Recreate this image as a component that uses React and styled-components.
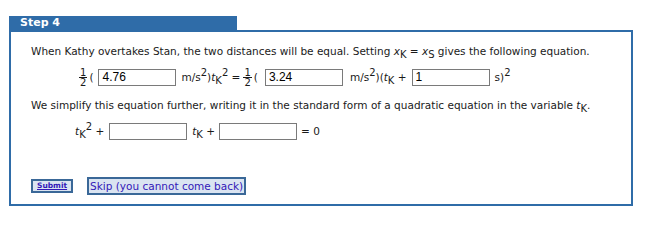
import React from "react";
import styled, { createGlobalStyle } from "styled-components";

const GlobalStyle = createGlobalStyle`
  body {
    margin: 0;
    background: #ffffff;
    font-family: Verdana, "DejaVu Sans", sans-serif;
    font-size: 10.5px;
    color: #1a1a1a;
  }
`;

const Page = styled.div`
  padding: 16px 0 0 9px;
`;

const Panel = styled.div`
  width: 624px;
`;

const Tab = styled.div`
  width: 228px;
  height: 14px;
  padding-left: 11px;
  box-sizing: border-box;
  background: #2f6ca8;
  color: #ffffff;
  font-weight: 700;
  font-size: 11px;
  line-height: 14px;
`;

const Box = styled.div`
  border: 2px solid #2f6ca8;
  padding: 11px 20px 10px 20px;
  height: 176px;
  box-sizing: border-box;
  display: flex;
  flex-direction: column;
`;

const Text = styled.p`
  margin: 0;
  line-height: 16px;
  white-space: nowrap;
`;

const Equation = styled.div`
  display: flex;
  align-items: center;
  gap: 3px;
  height: 20px;
  padding-left: ${(p) => p.$indent}px;
  margin: ${(p) => p.$margin};
  white-space: nowrap;
`;

const Frac = styled.span`
  display: inline-flex;
  flex-direction: column;
  align-items: center;
  font-size: 10px;
  line-height: 9px;
  margin-right: -1px;

  & > span:first-child {
    border-bottom: 1px solid #1a1a1a;
    padding: 0 1px;
  }
`;

const Input = styled.input`
  width: 78px;
  height: 17px;
  box-sizing: border-box;
  border: 1px solid #7a7a7a;
  padding: 0 3px;
  font-family: "Liberation Sans", Arial, sans-serif;
  font-size: 12px;
  color: #000;
  background: #fff;
  margin: 0 ${(p) => p.$gap ?? 2}px;
`;

const Var = styled.i`
  font-style: italic;
`;

const Sub = styled.sub`
  font-size: 10px;
  font-style: normal;
  vertical-align: -3px;
  line-height: 0;
`;

const Sup = styled.sup`
  font-size: 10px;
  vertical-align: 5px;
  line-height: 0;
`;

const Buttons = styled.div`
  margin-top: auto;
  margin-bottom: -1px;
  display: flex;
  align-items: center;
  gap: 14px;
`;

const Button = styled.button`
  font-family: Verdana, "DejaVu Sans", sans-serif;
  background: #dae4f1;
  border: 2px solid #3a6898;
  color: #3318b8;
  padding: ${(p) => (p.$small ? "0 4px" : "0 1px")};
  height: ${(p) => (p.$small ? 14 : 18)}px;
  font-size: ${(p) => (p.$small ? 7.5 : 10.5)}px;
  font-weight: ${(p) => (p.$small ? 700 : 400)};
  text-decoration: ${(p) => (p.$small ? "underline" : "none")};
  line-height: 1;
  cursor: pointer;
`;

const TK = () => (
  <Var>
    t<Sub>K</Sub>
  </Var>
);

const Half = () => (
  <Frac>
    <span>1</span>
    <span>2</span>
  </Frac>
);

export default function App() {
  return (
    <Page>
      <GlobalStyle />
      <Panel>
        <Tab>Step 4</Tab>
        <Box>
          <Text>
            When Kathy overtakes Stan, the two distances will be equal. Setting{" "}
            <Var>
              x<Sub>K</Sub>
            </Var>{" "}
            ={" "}
            <Var>
              x<Sub>S</Sub>
            </Var>{" "}
            gives the following equation.
          </Text>
          <Equation $indent={48} $margin="8px 0 10px">
            <Half />
            <span>(</span>
            <Input defaultValue="4.76" />
            <span>
              m/s<Sup>2</Sup>)<TK />
              <Sup>2</Sup> ={" "}
            </span>
            <Half />
            <span>(</span>
            <Input defaultValue="3.24" $gap={4} />
            <span>
              m/s<Sup>2</Sup>)(<TK /> +
            </span>
            <Input defaultValue="1" />
            <span>
              s)<Sup>2</Sup>
            </span>
          </Equation>
          <Text>
            We simplify this equation further, writing it in the standard form of
            a quadratic equation in the variable <TK />.
          </Text>
          <Equation $indent={44} $margin="8px 0 0">
            <span>
              <TK />
              <Sup>2</Sup> +
            </span>
            <Input />
            <span>
              <TK /> +
            </span>
            <Input $gap={1} />
            <span>= 0</span>
          </Equation>
          <Buttons>
            <Button $small>Submit</Button>
            <Button>Skip (you cannot come back)</Button>
          </Buttons>
        </Box>
      </Panel>
    </Page>
  );
}
